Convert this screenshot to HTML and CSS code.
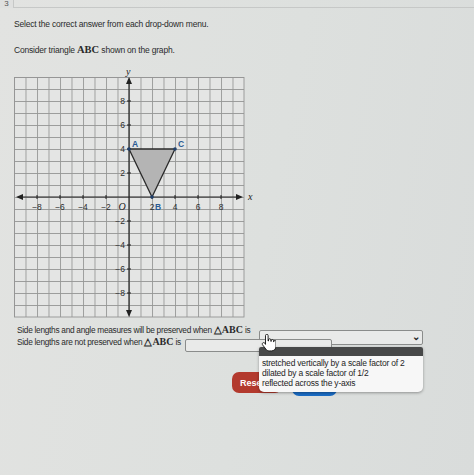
FILE: index.html
```html
<!DOCTYPE html>
<html>
<head>
<meta charset="utf-8">
<link rel="stylesheet" href="styles.css">
</head>
<body>
<div class="page">
  <div class="topbar"><div class="qnum">3</div></div>
  <div class="content">
    <p class="instr">Select the correct answer from each drop-down menu.</p>
    <p class="consider">Consider triangle <span class="math">ABC</span> shown on the graph.</p>
    <svg class="graph" width="245" height="254" viewBox="0 0 245 254" xmlns="http://www.w3.org/2000/svg">
      <defs>
        <pattern id="grid" x="0" y="11" width="11.5" height="12" patternUnits="userSpaceOnUse">
          <path d="M0 0.5H11.5M0.5 0V12" stroke="#959695" stroke-width="0.9" fill="none"/>
        </pattern>
      </defs>
      <rect x="0" y="11" width="230" height="240" fill="#e4e5e4"/>
      <rect x="0" y="11" width="230" height="240" fill="url(#grid)"/>
      <rect x="0.5" y="11.5" width="229.5" height="239.5" fill="none" stroke="#959695" stroke-width="0.9"/>
      <line x1="7" y1="131" x2="224" y2="131" stroke="#222" stroke-width="1.2"/>
      <polygon points="2,131 9,128 9,134" fill="#222"/>
      <polygon points="229,131 222,128 222,134" fill="#222"/>
      <line x1="115" y1="16" x2="115" y2="246" stroke="#222" stroke-width="1.2"/>
      <polygon points="115,11 112,18 118,18" fill="#222"/>
      <polygon points="115,251 112,244 118,244" fill="#222"/>
      <g stroke="#222" stroke-width="1">
        <line x1="23" y1="129" x2="23" y2="133"/>
        <line x1="46" y1="129" x2="46" y2="133"/>
        <line x1="69" y1="129" x2="69" y2="133"/>
        <line x1="92" y1="129" x2="92" y2="133"/>
        <line x1="138" y1="129" x2="138" y2="133"/>
        <line x1="161" y1="129" x2="161" y2="133"/>
        <line x1="184" y1="129" x2="184" y2="133"/>
        <line x1="207" y1="129" x2="207" y2="133"/>
        <line x1="113" y1="35" x2="117" y2="35"/>
        <line x1="113" y1="59" x2="117" y2="59"/>
        <line x1="113" y1="83" x2="117" y2="83"/>
        <line x1="113" y1="107" x2="117" y2="107"/>
        <line x1="113" y1="155" x2="117" y2="155"/>
        <line x1="113" y1="179" x2="117" y2="179"/>
        <line x1="113" y1="203" x2="117" y2="203"/>
        <line x1="113" y1="227" x2="117" y2="227"/>
      </g>
      <g class="lbl" text-anchor="middle">
        <text x="23" y="144">−8</text>
        <text x="46" y="144">−6</text>
        <text x="69" y="144">−4</text>
        <text x="92" y="144">−2</text>
        <text x="138" y="144">2</text>
        <text x="161" y="144">4</text>
        <text x="184" y="144">6</text>
        <text x="207" y="144">8</text>
      </g>
      <g class="lbl" text-anchor="end">
        <text x="111" y="38">8</text>
        <text x="111" y="62">6</text>
        <text x="111" y="86">4</text>
        <text x="111" y="110">2</text>
        <text x="111" y="158">−2</text>
        <text x="111" y="182">−4</text>
        <text x="111" y="206">−6</text>
        <text x="111" y="230">−8</text>
      </g>
      <text class="ital" x="108" y="144" text-anchor="middle">O</text>
      <text class="ital" x="234" y="134">x</text>
      <text class="ital" x="112" y="9">y</text>
      <polygon points="115,83 161,83 138,131" fill="#b4b4b4" stroke="#2a2a2a" stroke-width="1.3" stroke-linejoin="round"/>
      <circle cx="115" cy="83" r="1.8" fill="#1f3f6b"/>
      <circle cx="161" cy="83" r="1.8" fill="#1f3f6b"/>
      <circle cx="138" cy="131" r="1.8" fill="#1f3f6b"/>
      <g class="pt">
        <text x="118" y="81">A</text>
        <text x="164" y="81">C</text>
        <text x="141" y="144">B</text>
      </g>
    </svg>
    <div class="qrow q1">
      <span class="qtext">Side lengths and angle measures will be preserved when <span class="math">△ABC</span> is</span>
      <span class="select sel1"><span class="chev">⌄</span></span>
    </div>
    <div class="qrow q2">
      <span class="qtext">Side lengths are not preserved when <span class="math">△ABC</span> is</span>
      <span class="select sel2"></span>
    </div>
    <div class="buttons">
      <button class="btn reset">Reset</button>
      <button class="btn next" aria-label="Next"></button>
    </div>
  </div>
  <div class="menu">
    <div class="menu-head"></div>
    <div class="opt">stretched vertically by a scale factor of 2</div>
    <div class="opt">dilated by a scale factor of 1/2</div>
    <div class="opt">reflected across the y-axis</div>
  </div>
  <svg class="cursor" width="15" height="19" viewBox="0 0 15 19" xmlns="http://www.w3.org/2000/svg">
    <path d="M4.5 1.6c0-.8.6-1.4 1.3-1.4s1.3.6 1.3 1.4V7h.4V5.9c0-.7.6-1.2 1.2-1.2s1.2.5 1.2 1.2v1.5h.3V6.7c0-.7.6-1.2 1.2-1.2s1.2.5 1.2 1.2v1.2h.2v-.4c0-.6.5-1.1 1.1-1.1s1.1.5 1.1 1.1V12.3c0 2.6-2 4.6-4.5 4.6H8.2c-1.3 0-2.5-.6-3.2-1.6L1.6 10.9c-.5-.6-.4-1.5.2-2s1.5-.4 2 .2L4.5 10.4z" fill="#fff" stroke="#111" stroke-width="0.9" stroke-linejoin="round"/>
  </svg>
</div>
</body>
</html>
```
FILE: styles.css
```css
html, body {
  margin: 0;
  padding: 0;
}
body {
  width: 474px;
  height: 475px;
  overflow: hidden;
  background: linear-gradient(100deg, #e2e3e1 0%, #dde0de 55%, #d9dcdb 100%);
  font-family: "Liberation Sans", Arial, sans-serif;
  color: #2a2b2b;
}
.page {
  position: relative;
  width: 474px;
  height: 475px;
}
.topbar {
  height: 7px;
  border-bottom: 1px solid #c6c8c7;
  position: relative;
}
.qnum {
  position: absolute;
  left: 0;
  top: 0;
  width: 13px;
  height: 8px;
  border-right: 1px solid #c6c8c7;
  background: #dfe0df;
  font-size: 8px;
  line-height: 8px;
  text-align: center;
  color: #555;
}
.content {
  padding-left: 14px;
}
.instr {
  margin: 11px 0 0 0;
  font-size: 8.5px;
  letter-spacing: -0.2px;
  line-height: 10px;
  height: 10px;
}
.consider {
  margin: 16px 0 0 0;
  font-size: 8.5px;
  letter-spacing: -0.2px;
  line-height: 10px;
  height: 10px;
}
.math {
  font-family: "Liberation Serif", "Times New Roman", serif;
  font-weight: bold;
  font-size: 10.5px;
  letter-spacing: 0;
}
.graph {
  display: block;
  margin-top: 11px;
}
.lbl text {
  font-family: "Liberation Sans", Arial, sans-serif;
  font-size: 8.5px;
  fill: #2e2e2e;
}
.ital {
  font-family: "Liberation Serif", "Times New Roman", serif;
  font-style: italic;
  font-size: 10px;
  fill: #222;
}
.pt text {
  font-family: "Liberation Sans", Arial, sans-serif;
  font-weight: bold;
  font-size: 8.5px;
  fill: #2a5b93;
}
.qrow {
  display: flex;
  align-items: flex-start;
  height: 12px;
  padding-left: 3px;
  font-size: 8.3px;
  letter-spacing: -0.28px;
  line-height: 12px;
}
.qrow .math {
  font-size: 10px;
}
.q1 {
  margin-top: 4px;
}
.qtext {
  white-space: nowrap;
}
.select {
  display: flex;
  align-items: center;
  justify-content: flex-end;
  box-sizing: border-box;
  background: #e9eae9;
  border: 1px solid #8a8c8b;
  border-radius: 2px;
}
.sel1 {
  width: 164px;
  height: 15px;
  margin-top: 6px;
  margin-left: 9px;
}
.sel2 {
  width: 147px;
  height: 13px;
  margin-top: 3px;
  margin-left: 4px;
}
.chev {
  font-size: 10px;
  line-height: 8px;
  height: 10px;
  font-weight: bold;
  color: #222;
  padding-right: 3px;
}
.buttons {
  display: flex;
  gap: 10px;
  margin-top: 24px;
  margin-left: 218px;
}
.btn {
  border: none;
  border-radius: 7px;
  height: 21px;
  padding: 0;
  font-family: "Liberation Sans", Arial, sans-serif;
  font-weight: bold;
  font-size: 9px;
  color: #fff;
  text-align: left;
}
.reset {
  width: 50px;
  background: #b33a2e;
  padding-left: 8px;
}
.next {
  width: 45px;
  margin-top: 3px;
  background: #1a6cc4;
}
.menu {
  position: absolute;
  left: 259px;
  top: 347px;
  width: 164px;
  height: 45px;
  background: #f7f7f7;
  border-radius: 2px 2px 5px 5px;
  box-shadow: 0 1px 3px rgba(0,0,0,0.35);
  overflow: hidden;
}
.menu-head {
  height: 9px;
  background: #474848;
  margin-bottom: 2px;
}
.opt {
  font-size: 8.5px;
  letter-spacing: -0.2px;
  line-height: 10px;
  padding-left: 3px;
  color: #1e1e1e;
  white-space: nowrap;
}
.cursor {
  position: absolute;
  left: 261px;
  top: 334px;
}
```
